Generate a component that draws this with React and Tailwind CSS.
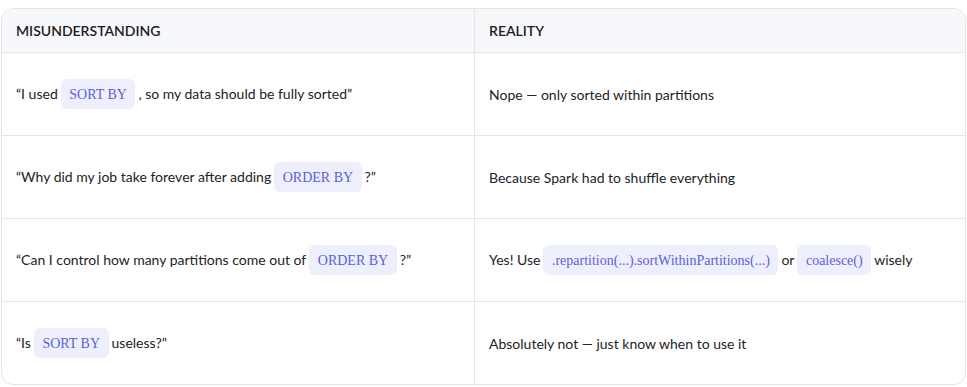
const rows = [
  {
    left: ["“I used", { code: "SORT BY" }, ", so my data should be fully sorted”"],
    right: ["Nope — only sorted within partitions"],
  },
  {
    left: ["“Why did my job take forever after adding", { code: "ORDER BY" }, "?”"],
    right: ["Because Spark had to shuffle everything"],
  },
  {
    left: ["“Can I control how many partitions come out of", { code: "ORDER BY" }, "?”"],
    right: [
      "Yes! Use",
      { code: ".repartition(...).sortWithinPartitions(...)" },
      "or",
      { code: "coalesce()" },
      "wisely",
    ],
  },
  {
    left: ["“Is", { code: "SORT BY" }, "useless?”"],
    right: ["Absolutely not — just know when to use it"],
  },
];

const Code = ({ children }) => (
  <code className="inline-flex items-center h-[30px] px-[8.5px] mx-[3px] rounded-md bg-[#eeeffd] text-[#5b5fdc] text-[14px] font-['Liberation_Serif',serif]">
    {children}
  </code>
);

const Cell = ({ parts, last, divider }) => (
  <div
    className={`flex items-center px-[14px] border-[#e4e5eb] ${last ? "h-[82px]" : "h-[83px] border-b"} ${
      divider ? "border-r" : ""
    }`}
  >
    <p className="whitespace-pre">
      {parts.map((p, i) =>
        typeof p === "string" ? <span key={i}>{p}</span> : <Code key={i}>{p.code}</Code>
      )}
    </p>
  </div>
);

export default function App() {
  return (
    <div className="bg-white pt-2 px-px font-['Lato',sans-serif] text-[14px] text-[#222326]">
      <div className="w-[965px] rounded-xl border border-[#e4e5eb] overflow-hidden">
        <div className="grid grid-cols-[473px_1fr]">
          <div className="h-[44px] flex items-center px-[14px] bg-[#f7f8fb] border-r border-b border-[#e4e5eb] font-semibold text-[#1c1d21]">
            MISUNDERSTANDING
          </div>
          <div className="h-[44px] flex items-center px-[14px] bg-[#f7f8fb] border-b border-[#e4e5eb] font-semibold text-[#1c1d21]">
            REALITY
          </div>
          {rows.map((r, i) => (
            <div key={i} className="contents">
              <Cell parts={r.left} divider last={i === rows.length - 1} />
              <Cell parts={r.right} last={i === rows.length - 1} />
            </div>
          ))}
        </div>
      </div>
    </div>
  );
}
